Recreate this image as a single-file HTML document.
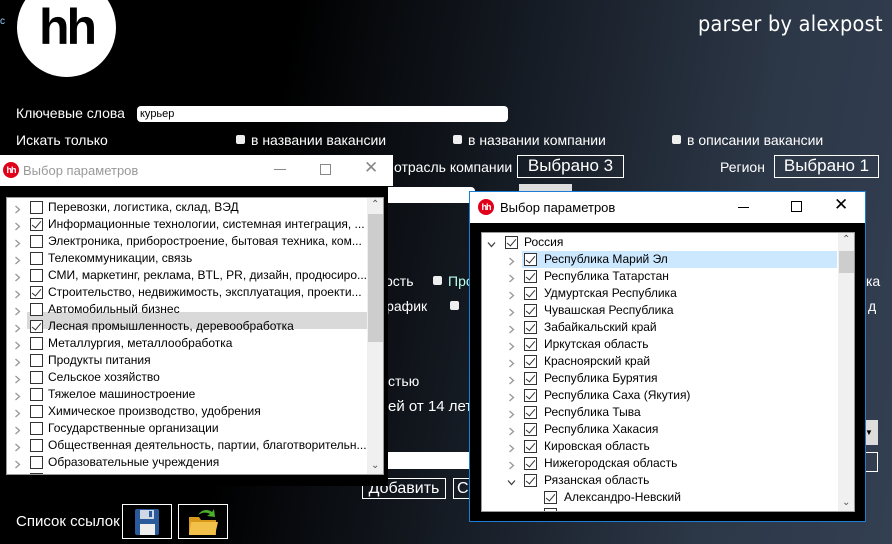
<!DOCTYPE html>
<html><head><meta charset="utf-8"><style>
*{margin:0;padding:0;box-sizing:border-box}
body{width:892px;height:544px;overflow:hidden;position:relative;font-family:"Liberation Sans","DejaVu Sans",sans-serif;
background:linear-gradient(100deg,#000 0%,#000 30%,#161c25 55%,#2c3747 80%,#334052 100%);color:#fff}
.a{position:absolute;white-space:nowrap}
.t{font-size:14px;color:#fff}
.cb{position:absolute;width:9px;height:9px;background:#eee;border-radius:2px}
.box{position:absolute;border:1px solid #fff;font-size:17px;text-align:center;color:#fff}
.dlg{position:absolute;background:#000}
.tb{position:absolute;left:0;right:0;top:0;background:#fff;color:#333;font-size:13px}
.logo{position:absolute;width:16px;height:16px;border-radius:50%;background:#e0001a;color:#fff;font-size:9px;font-weight:bold;text-align:center;line-height:16px;letter-spacing:-1px}
.list{position:absolute;background:#fff;border:1px solid #999;overflow:hidden;color:#000;font-size:12px}
.row{position:absolute;height:17px;line-height:17px;white-space:nowrap}
.ar{position:absolute;width:9px;height:9px}
.ck{position:absolute;width:13px;height:13px;border:1px solid #333;top:2px;background:#fff}
.ck.on::after{content:"";position:absolute;left:3px;top:0px;width:4px;height:8px;border:solid #333;border-width:0 1px 1px 0;transform:rotate(40deg)}
.sb{position:absolute;background:#f0f0f0}
</style></head><body>
<div class="a" style="left:17px;top:-22px;width:99px;height:99px;border-radius:50%;background:#fff;color:#000;font-size:50px;font-weight:bold;text-align:center;line-height:99px;letter-spacing:-3px">hh</div>
<div class="a" style="left:0;top:16px;font-size:10px;color:#9cf">c</div>
<div class="a" style="left:698px;top:12px;font-size:21px;font-family:'DejaVu Sans',sans-serif;color:#fff;letter-spacing:0.3px;transform:scaleX(0.92);transform-origin:left">parser by alexpost</div>

<div class="a t" style="left:16px;top:105px">Ключевые слова</div>
<div class="a" style="left:137px;top:106px;width:371px;height:16px;background:#fff;border-radius:4px;color:#000;font-size:11px;padding-left:3px;line-height:16px">курьер</div>
<div class="a t" style="left:16px;top:132px">Искать только</div>
<div class="cb" style="left:236px;top:135px"></div><div class="a t" style="left:251px;top:132px">в названии вакансии</div>
<div class="cb" style="left:453px;top:135px"></div><div class="a t" style="left:468px;top:132px">в названии компании</div>
<div class="cb" style="left:672px;top:135px"></div><div class="a t" style="left:687px;top:132px">в описании вакансии</div>
<div class="a t" style="left:394px;top:159px">отрасль компании</div>
<div class="box" style="left:517px;top:155px;width:107px;height:23px">Выбрано 3</div>
<div class="a t" style="left:720px;top:159px">Регион</div>
<div class="box" style="left:774px;top:155px;width:105px;height:23px">Выбрано 1</div>
<div class="a" style="left:385px;top:187px;width:90px;height:16px;background:#fff;border-radius:4px"></div>
<div class="a" style="left:519px;top:184px;width:53px;height:20px;background:#ddd"></div>
<div class="a t" style="left:385px;top:273px">ость</div><div class="cb" style="left:433px;top:276px"></div><div class="a t" style="left:448px;top:273px;color:#bfe">Про</div>
<div class="a t" style="left:381px;top:298px">график</div><div class="cb" style="left:450px;top:301px"></div>
<div class="a t" style="left:866px;top:273px">ка</div>
<div class="a t" style="left:868px;top:298px">д</div>
<div class="a t" style="left:388px;top:373px">стью</div>
<div class="a t" style="left:388px;top:398px;font-size:15px">ей от 14 лет</div>
<div class="a" style="left:385px;top:452px;width:90px;height:17px;background:#fff"></div>
<div class="a" style="left:865px;top:420px;width:13px;height:25px;background:#ddd;color:#000;font-size:8px;line-height:25px">▼</div>
<div class="a" style="left:865px;top:452px;width:13px;height:20px;border:1px solid #fff;border-left:none"></div>
<div class="box" style="left:362px;top:478px;width:84px;height:21px;font-size:16px;line-height:19px">Добавить</div>
<div class="box" style="left:453px;top:478px;width:30px;height:21px;font-size:16px;line-height:19px;text-align:left;padding-left:3px">С</div>
<div class="a t" style="left:16px;top:513px;font-size:15px">Список ссылок</div>
<div class="box" style="left:122px;top:504px;width:50px;height:35px">
<svg width="30" height="28" viewBox="0 0 30 28" style="margin-top:3px"><rect x="3" y="1" width="24" height="26" rx="2" fill="#2b5a9a"/><rect x="8" y="2" width="14" height="9" fill="#cfd8e4"/><rect x="17" y="3" width="3" height="6" fill="#2b5a9a"/><rect x="8" y="16" width="15" height="11" fill="#eee"/></svg></div>
<div class="box" style="left:178px;top:504px;width:50px;height:35px">
<svg width="34" height="30" viewBox="0 0 34 30" style="margin-top:2px"><path d="M3 10h10l2 3h15v15H3z" fill="#d99a1c"/><path d="M5 15h27l-3 13H3z" fill="#f2c14a"/><path d="M12 8c4-6 10-6 14-3l2-3 1 8-8-1 3-2c-3-2-8-2-12 1z" fill="#4caf2a"/></svg></div>

<div class="dlg" style="left:0;top:155px;width:388px;height:331px">
 <div class="tb" style="height:31px;color:#999;width:393px">
  <div class="logo" style="left:3px;top:7px">hh</div>
  <div class="a" style="left:23px;top:8px;font-size:13px">Выбор параметров</div>
  <div class="a" style="left:274px;top:14px;width:12px;height:1px;background:#888"></div>
  <div class="a" style="left:320px;top:9px;width:11px;height:11px;border:1px solid #888"></div>
  <div class="a" style="left:364px;top:3px;font-size:17px;color:#888">✕</div>
 </div>
 <div class="list" style="left:6px;top:42px;width:378px;height:278px">
  <div class="sb" style="left:360px;top:0;width:17px;height:278px"></div>
  <div class="a" style="left:364px;top:1px;font-size:10px;color:#555">⌃</div>
  <div class="a" style="left:361px;top:16px;width:15px;height:128px;background:#cdcdcd"></div>
  <div class="a" style="left:364px;top:262px;font-size:10px;color:#555">⌄</div>
  <div class="row" style="left:20px;top:114px;width:340px;background:#d9d9d9"></div>
  <div id="r1"></div>
 </div>
</div>

<div class="dlg" style="left:469px;top:191px;width:397px;height:331px;border:1px solid #1a7ed6">
 <div class="tb" style="height:31px;color:#000">
  <div class="logo" style="left:8px;top:7px">hh</div>
  <div class="a" style="left:30px;top:8px;font-size:13px">Выбор параметров</div>
  <div class="a" style="left:268px;top:15px;width:11px;height:1px;background:#000"></div>
  <div class="a" style="left:321px;top:9px;width:11px;height:11px;border:1px solid #000"></div>
  <div class="a" style="left:364px;top:3px;font-size:17px">✕</div>
 </div>
 <div class="list" style="left:11px;top:40px;width:374px;height:280px">
  <div class="sb" style="left:356px;top:0;width:17px;height:280px"></div>
  <div class="a" style="left:360px;top:1px;font-size:10px;color:#555">⌃</div>
  <div class="a" style="left:357px;top:18px;width:15px;height:22px;background:#cdcdcd"></div>
  <div class="a" style="left:360px;top:264px;font-size:10px;color:#555">⌄</div>
  <div class="row" style="left:40px;top:18px;width:315px;background:#cce8ff"></div>
  <div id="r2"></div>
 </div>
</div>

<script>
var R='<svg viewBox="0 0 9 9" width="9" height="9"><path d="M2.5 1l4 3.5-4 3.5" fill="none" stroke="#999" stroke-width="1.3"/></svg>';
var D='<svg viewBox="0 0 9 9" width="9" height="9"><path d="M1 2.5l3.5 4 3.5-4" fill="none" stroke="#444" stroke-width="1.3"/></svg>';
var a=[["Перевозки, логистика, склад, ВЭД",0],["Информационные технологии, системная интеграция, ...",1],["Электроника, приборостроение, бытовая техника, ком...",0],["Телекоммуникации, связь",0],["СМИ, маркетинг, реклама, BTL, PR, дизайн, продюсиро...",0],["Строительство, недвижимость, эксплуатация, проекти...",1],["Автомобильный бизнес",0],["Лесная промышленность, деревообработка",1],["Металлургия, металлообработка",0],["Продукты питания",0],["Сельское хозяйство",0],["Тяжелое машиностроение",0],["Химическое производство, удобрения",0],["Государственные организации",0],["Общественная деятельность, партии, благотворительн...",0],["Образовательные учреждения",0],["",0]];
var h="";a.forEach(function(r,i){var y=1+i*17;h+='<div class="ar" style="left:6px;top:'+(y+4)+'px">'+R+'</div><div class="ck'+(r[1]?' on':'')+'" style="left:23px;top:'+(y+2)+'px"></div><div class="row" style="left:41px;top:'+y+'px">'+r[0]+'</div>';});
document.getElementById("r1").outerHTML=h;
var b=["Республика Марий Эл","Республика Татарстан","Удмуртская Республика","Чувашская Республика","Забайкальский край","Иркутская область","Красноярский край","Республика Бурятия","Республика Саха (Якутия)","Республика Тыва","Республика Хакасия","Кировская область","Нижегородская область","Рязанская область"];
h='<div class="ar" style="left:5px;top:5px">'+D+'</div><div class="ck on" style="left:23px;top:3px"></div><div class="row" style="left:42px;top:1px">Россия</div>';
b.forEach(function(t,i){var y=18+i*17;h+='<div class="ar" style="left:25px;top:'+(y+4)+'px">'+(i==13?D:R)+'</div><div class="ck on" style="left:42px;top:'+(y+2)+'px"></div><div class="row" style="left:62px;top:'+y+'px">'+t+'</div>';});
h+='<div class="ck on" style="left:62px;top:258px"></div><div class="row" style="left:82px;top:256px">Александро-Невский</div><div class="ck" style="left:62px;top:275px"></div>';
document.getElementById("r2").outerHTML=h;
</script>
</body></html>
